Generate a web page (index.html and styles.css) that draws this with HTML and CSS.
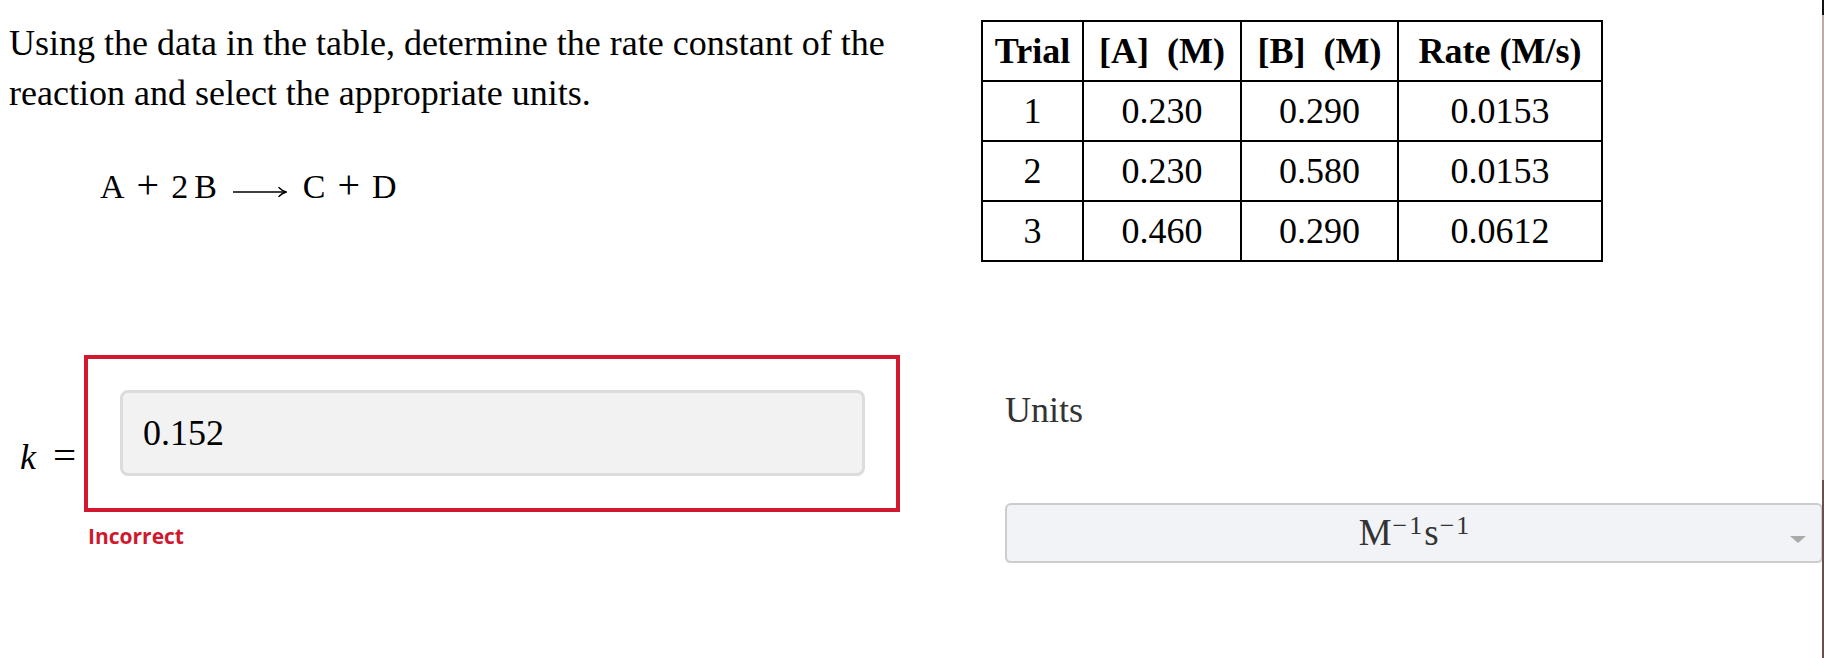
FILE: index.html
```html
<!DOCTYPE html>
<html lang="en">
<head>
  <meta charset="UTF-8" />
  <title>Rate constant</title>
  <link rel="stylesheet" href="styles.css">
</head>
<body>
<div class="page">
  <div class="problem">
    <div class="question">
      <p class="prompt">Using the data in the table, determine the rate constant of the reaction and select the appropriate units.</p>

      <div class="equation">
        <span>A</span>
        <span class="op">+</span>
        <span class="coef">2</span>
        <span class="thin">B</span>
        <svg class="arrow" width="54" height="12" viewBox="0 0 54 12">
          <path d="M0 6 H52.5" stroke="#000" stroke-width="1.5" fill="none"/>
          <path d="M45.5 1.2 Q49 4.8 53.2 6 Q49 7.2 45.5 10.8" stroke="#000" stroke-width="1.4" fill="none"/>
        </svg>
        <span class="after-arrow">C</span>
        <span class="op">+</span>
        <span class="last">D</span>
      </div>
    </div>

    <table class="data-table">
      <thead>
        <tr>
          <th class="col-trial">Trial</th>
          <th class="col-a">[A]&nbsp; (M)</th>
          <th class="col-b">[B]&nbsp; (M)</th>
          <th class="col-rate">Rate (M/s)</th>
        </tr>
      </thead>
      <tbody>
        <tr><td>1</td><td>0.230</td><td>0.290</td><td>0.0153</td></tr>
        <tr><td>2</td><td>0.230</td><td>0.580</td><td>0.0153</td></tr>
        <tr><td>3</td><td>0.460</td><td>0.290</td><td>0.0612</td></tr>
      </tbody>
    </table>
  </div>

  <div class="answers">
    <div class="answer">
      <div class="answer-row">
        <div class="k-label"><i>k</i><span class="eq">=</span></div>
        <div class="answer-box">
          <input class="answer-input" type="text" value="0.152" readonly />
        </div>
      </div>
      <div class="feedback">Incorrect</div>
    </div>

    <div class="units">
      <div class="units-label">Units</div>
      <div class="units-select">
        <span class="units-value">M<sup>−1</sup>s<sup>−1</sup></span>
        <span class="caret"></span>
      </div>
    </div>
  </div>
</div>

<div class="edge"></div>
</body>
</html>
```

FILE: styles.css
```css
body {
  margin: 0;
  background: #ffffff;
  font-family: "Liberation Serif", "Times New Roman", serif;
  color: #000;
  overflow: hidden;
}

.page {
  padding-left: 8px;
}

/* top: question + data table */
.problem {
  display: flex;
  align-items: flex-start;
}

.question {
  flex: none;
  width: 973px;
  padding-top: 18px;
}

.prompt {
  margin: 0;
  width: 930px;
  font-size: 36px;
  line-height: 50px;
  padding-left: 1px;
}

.equation {
  display: flex;
  align-items: baseline;
  margin-top: 54px;
  padding-left: 92px;
  font-size: 34px;
  line-height: 30px;
}

.equation > * {
  flex: none;
}

.equation .op {
  font-size: 40px;
  line-height: 0;
  margin-left: 12px;
}

.equation .coef {
  margin-left: 12px;
}

.equation .thin {
  margin-left: 6px;
}

.equation .arrow {
  margin: 0 0 3px 16px;
}

.equation .after-arrow {
  margin-left: 16px;
}

.equation .last {
  margin-left: 12px;
}

.data-table {
  margin-top: 20px;
  border-collapse: collapse;
  font-size: 36px;
}

.data-table th,
.data-table td {
  border: 2px solid #000;
  padding: 0;
  height: 58px;
  text-align: center;
  vertical-align: middle;
}

.data-table th {
  font-weight: bold;
}

.col-trial { width: 99px; }
.col-a { width: 156px; }
.col-b { width: 155px; }
.col-rate { width: 202px; }

/* bottom: answer + units */
.answers {
  display: flex;
  margin-top: 93px;
}

.answer {
  flex: none;
  width: 997px;
}

.answer-row {
  display: flex;
  align-items: flex-start;
}

.k-label {
  width: 64px;
  padding-left: 12px;
  margin-top: 84px;
  font-size: 36px;
  line-height: 36px;
  white-space: nowrap;
}

.k-label .eq {
  margin-left: 17px;
  font-size: 41px;
  line-height: 0;
}

.answer-box {
  border: 4px solid #d0192e;
  padding: 31px 31px 32px 32px;
}

.answer-input {
  display: block;
  width: 745px;
  height: 86px;
  box-sizing: border-box;
  margin: 0;
  padding: 0 0 0 20px;
  border: 3px solid #dcdcdc;
  border-radius: 8px;
  background: #f2f2f2;
  font-family: "Liberation Serif", "Times New Roman", serif;
  font-size: 36px;
  color: #000;
  outline: none;
}

.feedback {
  margin-top: 13px;
  padding-left: 80px;
  font-family: "Open Sans", "Liberation Sans", sans-serif;
  font-size: 21px;
  line-height: 22px;
  font-weight: 700;
  color: #d0192e;
}

.units {
  flex: none;
  width: 818px;
  padding-top: 37px;
}

.units-label {
  font-size: 36px;
  line-height: 36px;
  color: #333;
}

.units-select {
  margin-top: 75px;
  height: 60px;
  box-sizing: border-box;
  display: flex;
  align-items: center;
  border: 2px solid #cccccc;
  border-radius: 6px;
  background: #f2f3f7;
  box-shadow: 0 1px 1px rgba(0, 0, 0, 0.08);
}

.units-value {
  flex: 1;
  text-align: center;
  padding-left: 33px;
  font-size: 37px;
  line-height: 34px;
  color: #333;
}

.units-value sup {
  font-size: 26px;
  line-height: 0;
  vertical-align: 11px;
  letter-spacing: 2px;
  margin-left: 1px;
}

.caret {
  align-self: flex-end;
  margin: 0 15px 18px 0;
  width: 0;
  height: 0;
  border-left: 8px solid transparent;
  border-right: 8px solid transparent;
  border-top: 7px solid #aaaaaa;
}

/* window edge on the right */
.edge {
  position: fixed;
  top: 0;
  right: 0;
  width: 2px;
  height: 100%;
  background: linear-gradient(#111 0 15px, #c2a9a5 15px 480px, #6a504d 480px);
}
```
